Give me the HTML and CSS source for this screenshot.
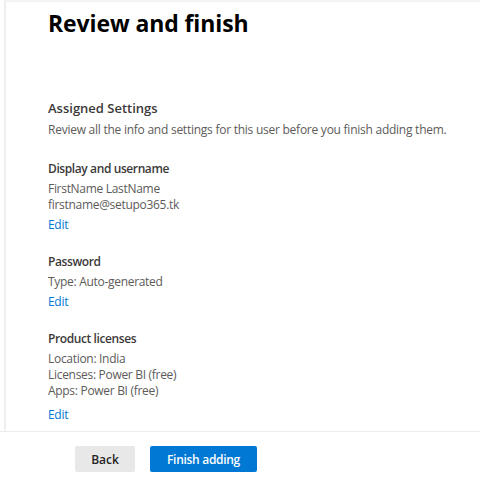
FILE: index.html
```html
<!DOCTYPE html>
<html lang="en">
<head>
<meta charset="utf-8">
<title>Review and finish</title>
<link rel="stylesheet" href="styles.css">
</head>
<body>
<main class="panel">
  <h1 class="title">Review and finish</h1>
  <section class="intro">
    <h2 class="intro-title">Assigned Settings</h2>
    <p class="intro-text">Review all the info and settings for this user before you finish adding them.</p>
  </section>
  <section class="group">
    <h3 class="group-title">Display and username</h3>
    <p class="line">FirstName LastName</p>
    <p class="line">firstname@setupo365.tk</p>
    <a class="edit" href="#">Edit</a>
  </section>
  <section class="group">
    <h3 class="group-title">Password</h3>
    <p class="line">Type: Auto-generated</p>
    <a class="edit" href="#">Edit</a>
  </section>
  <section class="group group-wide">
    <h3 class="group-title">Product licenses</h3>
    <p class="line">Location: India</p>
    <p class="line">Licenses: Power BI (free)</p>
    <p class="line">Apps: Power BI (free)</p>
    <a class="edit" href="#">Edit</a>
  </section>
</main>
<footer class="footer">
  <button class="btn btn-secondary" type="button">Back</button>
  <button class="btn btn-primary" type="button">Finish adding</button>
</footer>
</body>
</html>
```
FILE: styles.css
```css
*, *::before, *::after {
  box-sizing: border-box;
}
html, body {
  margin: 0;
  padding: 0;
  background: #ffffff;
}
body {
  height: 100vh;
  display: flex;
  flex-direction: column;
  font-family: "Open Sans", "Noto Sans", sans-serif;
  color: #323130;
}
.panel {
  flex: 1;
  margin-left: 4px;
  border-left: 2px solid #efefef;
  border-top: 2px solid #f4f4f4;
  padding: 7px 0 0 42px;
  display: flex;
  flex-direction: column;
  align-items: flex-start;
}
.title {
  margin: 0;
  font-size: 23px;
  line-height: 28px;
  font-weight: 700;
  letter-spacing: -0.1px;
  color: #000000;
}
.intro {
  margin-top: 62px;
}
.intro-title {
  margin: 0;
  font-size: 13px;
  line-height: 18px;
  font-weight: 600;
  color: #3b3a39;
}
.intro-text {
  margin: 5px 0 0;
  font-size: 12px;
  line-height: 16px;
  letter-spacing: -0.25px;
  color: #5c5b5a;
}
.group {
  display: flex;
  flex-direction: column;
  align-items: flex-start;
  margin-top: 23px;
}
.group + .group {
  margin-top: 21px;
}
.group-title {
  margin: 0 0 4px;
  font-size: 12px;
  line-height: 16px;
  font-weight: 600;
  letter-spacing: -0.4px;
  color: #3b3a39;
}
.line {
  margin: 0;
  font-size: 12px;
  line-height: 16px;
  letter-spacing: -0.3px;
  color: #5c5b5a;
}
.edit {
  margin-top: 4px;
  font-size: 12px;
  line-height: 16px;
  letter-spacing: -0.3px;
  color: #0078d4;
  text-decoration: none;
}
.group-wide .edit {
  margin-top: 8px;
}
.footer {
  flex: none;
  height: 48px;
  border-top: 1px solid #ececec;
  display: flex;
  align-items: flex-start;
  gap: 15px;
  padding: 14px 0 0 75px;
}
.btn {
  height: 26px;
  border: none;
  border-radius: 2px;
  padding: 0;
  font-family: "Open Sans", "Noto Sans", sans-serif;
  font-size: 12px;
  font-weight: 600;
  cursor: pointer;
}
.btn-secondary {
  width: 60px;
  background: #e8e8e8;
  color: #252423;
}
.btn-primary {
  width: 107px;
  background: #0078d4;
  color: #ffffff;
  letter-spacing: -0.3px;
}
```
